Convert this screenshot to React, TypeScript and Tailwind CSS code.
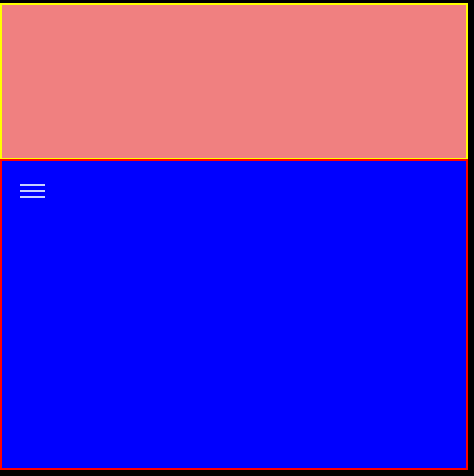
export default function App() {
  return (
    <div className="w-[474px] h-[476px] bg-black pt-[3px]">
      <div className="w-[468px] flex flex-col">
        <div className="h-[157px] bg-[#f08080] border-2 border-[#ffff00]" />
        <div className="h-[311px] bg-[#0000ff] border-2 border-[#ff0000] -mt-[1px] pt-[23px] pl-[18px]">
          <div className="flex flex-col gap-[4px] w-[25px]">
            <div className="h-[2px] bg-[#c8d0ff]" />
            <div className="h-[2px] bg-[#c8d0ff]" />
            <div className="h-[2px] bg-[#c8d0ff]" />
          </div>
        </div>
      </div>
    </div>
  );
}
